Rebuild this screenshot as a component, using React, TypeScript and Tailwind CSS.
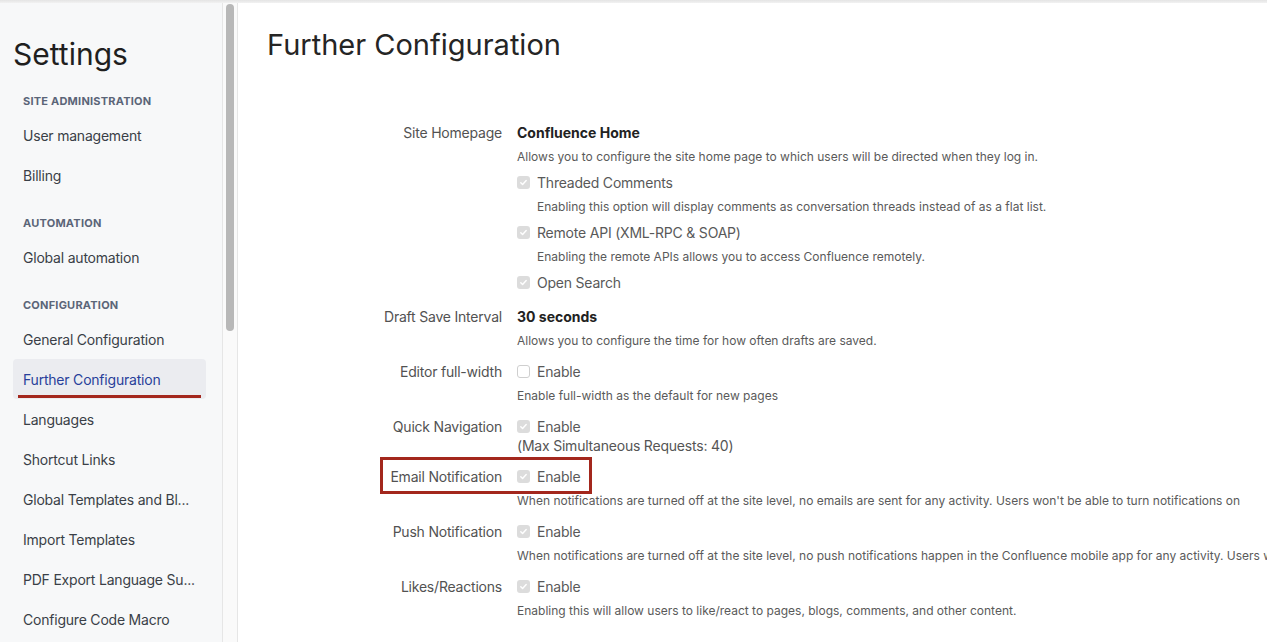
const font = { fontFamily: "Inter, 'Noto Sans', 'Liberation Sans', sans-serif" };

type NavItem = { label: string; selected?: boolean };
type NavSection = { title: string; items: NavItem[] };

const sections: NavSection[] = [
  {
    title: "Site administration",
    items: [{ label: "User management" }, { label: "Billing" }],
  },
  {
    title: "Automation",
    items: [{ label: "Global automation" }],
  },
  {
    title: "Configuration",
    items: [
      { label: "General Configuration" },
      { label: "Further Configuration", selected: true },
      { label: "Languages" },
      { label: "Shortcut Links" },
      { label: "Global Templates and Bl..." },
      { label: "Import Templates" },
      { label: "PDF Export Language Su..." },
      { label: "Configure Code Macro" },
    ],
  },
];

function Checkbox({ checked = true }: { checked?: boolean }) {
  if (!checked) {
    return (
      <span className="w-[13px] h-[13px] rounded-[3px] border border-[#cfcfcf] bg-white shrink-0" />
    );
  }
  return (
    <span className="w-[13px] h-[13px] rounded-[3px] bg-[#dcdcdc] shrink-0 flex items-center justify-center">
      <svg width="9" height="9" viewBox="0 0 10 10" fill="none">
        <path d="M2 5.2l2 2L8 2.8" stroke="#ffffff" strokeWidth="1.6" strokeLinecap="round" strokeLinejoin="round" />
      </svg>
    </span>
  );
}

function CheckLine({ label, checked = true }: { label: string; checked?: boolean }) {
  return (
    <div className="h-6 flex items-center gap-[7px] text-[14px] tracking-[-0.015em] text-[#595959]">
      <Checkbox checked={checked} />
      <span>{label}</span>
    </div>
  );
}

function Desc({ children, className = "" }: { children: React.ReactNode; className?: string }) {
  return (
    <div className={`h-6 pt-[2px] leading-[22px] text-[12px] text-[#5a5a5a] whitespace-nowrap ${className}`}>
      {children}
    </div>
  );
}

function Row({
  label,
  children,
  className = "",
  highlight = false,
}: {
  label: string;
  children: React.ReactNode;
  className?: string;
  highlight?: boolean;
}) {
  return (
    <div className={`relative flex gap-[15px] ${className}`}>
      <div className="w-[264px] shrink-0 h-6 flex items-center justify-end text-[14px] tracking-[-0.015em] text-[#525252]">
        {label}
      </div>
      <div className="flex flex-col min-w-0">{children}</div>
      {highlight && (
        <div className="absolute left-[142px] top-[-7px] w-[212px] h-[37px] border-[3px] border-[#a3271d]" />
      )}
    </div>
  );
}

export default function App() {
  return (
    <div className="h-[642px] w-[1267px] overflow-hidden bg-white flex flex-col" style={font}>
      <div className="h-[3px] bg-gradient-to-b from-[#e4e4e4] to-[#f2f2f2] shrink-0" />
      <div className="flex flex-1 min-h-0">
        <aside className="w-[222px] shrink-0 bg-[#f7f8f9] pt-[33px]">
          <h1 className="pl-[13px] text-[30px] leading-9 text-[#1f1f1f]">Settings</h1>
          <nav className="mt-[15px]">
            {sections.map((s, i) => (
              <div key={s.title} className={i > 0 ? "mt-[14px]" : ""}>
                <div className="h-7 flex items-center pl-[23px] text-[11px] font-bold uppercase tracking-[0.02em] text-[#5b6578]">
                  {s.title}
                </div>
                {s.items.map((it) => (
                  <div
                    key={it.label}
                    className={`relative ml-[13px] w-[193px] h-10 px-[10px] flex items-center rounded-[4px] text-[14px] tracking-[-0.015em] whitespace-nowrap ${
                      it.selected ? "bg-[#ebecf0] text-[#283f9a]" : "text-[#3a3f47]"
                    }`}
                  >
                    {it.label}
                    {it.selected && (
                      <span className="absolute left-[5px] right-[5px] bottom-[1px] h-[3px] bg-[#a3271d]" />
                    )}
                  </div>
                ))}
              </div>
            ))}
          </nav>
        </aside>
        <div className="w-[16px] shrink-0 border-l border-r border-[#e6e6e6] bg-[#fafafa] pt-[1px] flex justify-center">
          <div className="w-[8px] h-[327px] rounded-full bg-[#b8b8b8]" />
        </div>
        <main className="flex-1 min-w-0 overflow-hidden">
          <h2 className="pl-[29px] mt-[24px] text-[29px] leading-9 text-[#252525]">Further Configuration</h2>
          <div className="mt-[57px] flex flex-col gap-[7px]">
            <Row label="Site Homepage" className="pb-[3px]">
              <div className="h-6 flex items-center text-[14px] font-bold text-[#222]">Confluence Home</div>
              <Desc>Allows you to configure the site home page to which users will be directed when they log in.</Desc>
              <div className="mt-[2px]">
                <CheckLine label="Threaded Comments" />
              </div>
              <Desc className="pl-[20px]">
                Enabling this option will display comments as conversation threads instead of as a flat list.
              </Desc>
              <div className="mt-[2px]">
                <CheckLine label="Remote API (XML-RPC & SOAP)" />
              </div>
              <Desc className="pl-[20px]">Enabling the remote APIs allows you to access Confluence remotely.</Desc>
              <div className="mt-[2px]">
                <CheckLine label="Open Search" />
              </div>
            </Row>
            <Row label="Draft Save Interval">
              <div className="h-6 flex items-center text-[14px] font-bold text-[#222]">30 seconds</div>
              <Desc>Allows you to configure the time for how often drafts are saved.</Desc>
            </Row>
            <Row label="Editor full-width">
              <CheckLine label="Enable" checked={false} />
              <Desc>Enable full-width as the default for new pages</Desc>
            </Row>
            <Row label="Quick Navigation">
              <CheckLine label="Enable" />
              <div className="leading-4 mb-[3px] text-[14px] tracking-[-0.015em] text-[#555]">(Max Simultaneous Requests: 40)</div>
            </Row>
            <Row label="Email Notification" highlight>
              <CheckLine label="Enable" />
              <Desc>
                When notifications are turned off at the site level, no emails are sent for any activity. Users won't be able to turn notifications on
              </Desc>
            </Row>
            <Row label="Push Notification">
              <CheckLine label="Enable" />
              <Desc>
                When notifications are turned off at the site level, no push notifications happen in the Confluence mobile app for any activity. Users won't be able to turn notifications on
              </Desc>
            </Row>
            <Row label="Likes/Reactions">
              <CheckLine label="Enable" />
              <Desc>Enabling this will allow users to like/react to pages, blogs, comments, and other content.</Desc>
            </Row>
          </div>
        </main>
      </div>
    </div>
  );
}
